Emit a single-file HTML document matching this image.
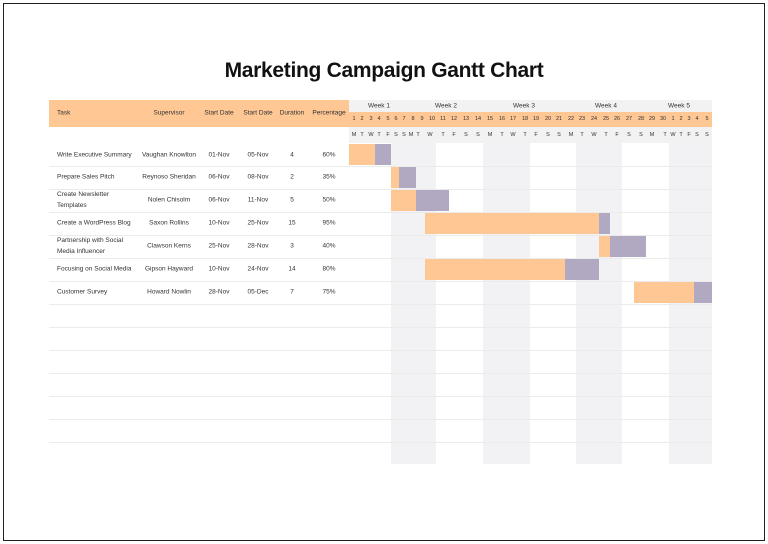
<!DOCTYPE html>
<html><head><meta charset="utf-8"><style>
*{margin:0;padding:0;box-sizing:border-box}
body{width:768px;height:544px;background:#fff;position:relative;overflow:hidden;font-family:"Liberation Sans",sans-serif;color:#333}
.frame{position:absolute;left:3px;top:3px;width:762px;height:538px;border:1.5px solid #222}
.title{position:absolute;left:0;width:768px;top:59px;text-align:center;font-weight:bold;font-size:21px;color:#111;letter-spacing:-0.3px}
.a{position:absolute}
.t{position:absolute;font-size:6.5px;white-space:nowrap;transform:translate(-50%,-50%)}
.l{position:absolute;font-size:6.5px;white-space:nowrap;transform:translateY(-50%);line-height:11px}
.line{position:absolute;left:49px;width:663px;height:1px;background:#ebebeb}
.o{position:absolute;background:#fec793}
.p{position:absolute;background:#b1a9c2}
</style></head><body>
<div class="frame"></div>
<div class="title">Marketing Campaign Gantt Chart</div>
<div class="a" style="left:49px;top:100px;width:300px;height:27px;background:#fec793"></div>
<div class="a" style="left:349px;top:100px;width:363px;height:12px;background:#f2f2f2"></div>
<div class="a" style="left:349px;top:112px;width:363px;height:15px;background:#fec793"></div>
<div class="a" style="left:349px;top:127px;width:363px;height:16px;background:#f2f2f2"></div>
<div class="a" style="left:391px;top:143px;width:45px;height:321px;background:#f2f2f4"></div>
<div class="a" style="left:483px;top:143px;width:47px;height:321px;background:#f2f2f4"></div>
<div class="a" style="left:576px;top:143px;width:46px;height:321px;background:#f2f2f4"></div>
<div class="a" style="left:669px;top:143px;width:43px;height:321px;background:#f2f2f4"></div>
<div class="line" style="top:166px"></div><div class="line" style="top:189px"></div><div class="line" style="top:212px"></div><div class="line" style="top:235px"></div><div class="line" style="top:258px"></div><div class="line" style="top:281px"></div><div class="line" style="top:304px"></div><div class="line" style="top:327px"></div><div class="line" style="top:350px"></div><div class="line" style="top:373px"></div><div class="line" style="top:396px"></div><div class="line" style="top:419px"></div><div class="line" style="top:442px"></div>
<div class="o" style="left:349px;top:144px;width:26px;height:21px"></div><div class="p" style="left:375px;top:144px;width:16px;height:21px"></div>
<div class="o" style="left:391px;top:167px;width:8px;height:21px"></div><div class="p" style="left:399px;top:167px;width:17px;height:21px"></div>
<div class="o" style="left:391px;top:190px;width:25px;height:21px"></div><div class="p" style="left:416px;top:190px;width:33px;height:21px"></div>
<div class="o" style="left:425px;top:213px;width:174px;height:21px"></div><div class="p" style="left:599px;top:213px;width:11px;height:21px"></div>
<div class="o" style="left:599px;top:236px;width:11px;height:21px"></div><div class="p" style="left:610px;top:236px;width:36px;height:21px"></div>
<div class="o" style="left:425px;top:259px;width:140px;height:21px"></div><div class="p" style="left:565px;top:259px;width:34px;height:21px"></div>
<div class="o" style="left:634px;top:282px;width:60px;height:21px"></div><div class="p" style="left:694px;top:282px;width:18px;height:21px"></div>
<div class="l" style="left:57px;top:113px">Task</div>
<div class="t" style="left:169px;top:113px">Supervisor</div>
<div class="t" style="left:219px;top:113px">Start Date</div>
<div class="t" style="left:258px;top:113px">Start Date</div>
<div class="t" style="left:292px;top:113px">Duration</div>
<div class="t" style="left:329px;top:113px">Percentage</div>
<div class="t" style="left:379px;top:106px">Week 1</div>
<div class="t" style="left:446px;top:106px">Week 2</div>
<div class="t" style="left:524px;top:106px">Week 3</div>
<div class="t" style="left:606px;top:106px">Week 4</div>
<div class="t" style="left:679px;top:106px">Week 5</div>
<div>
<div class="t" style="left:354px;top:119px;font-size:5.5px">1</div><div class="t" style="left:362px;top:119px;font-size:5.5px">2</div><div class="t" style="left:371px;top:119px;font-size:5.5px">3</div><div class="t" style="left:379px;top:119px;font-size:5.5px">4</div><div class="t" style="left:388px;top:119px;font-size:5.5px">5</div><div class="t" style="left:396px;top:119px;font-size:5.5px">6</div><div class="t" style="left:404px;top:119px;font-size:5.5px">7</div><div class="t" style="left:413px;top:119px;font-size:5.5px">8</div><div class="t" style="left:422px;top:119px;font-size:5.5px">9</div><div class="t" style="left:432px;top:119px;font-size:5.5px">10</div><div class="t" style="left:443px;top:119px;font-size:5.5px">11</div><div class="t" style="left:454px;top:119px;font-size:5.5px">12</div><div class="t" style="left:466px;top:119px;font-size:5.5px">13</div><div class="t" style="left:478px;top:119px;font-size:5.5px">14</div><div class="t" style="left:490px;top:119px;font-size:5.5px">15</div><div class="t" style="left:502px;top:119px;font-size:5.5px">16</div><div class="t" style="left:513px;top:119px;font-size:5.5px">17</div><div class="t" style="left:525px;top:119px;font-size:5.5px">18</div><div class="t" style="left:536px;top:119px;font-size:5.5px">19</div><div class="t" style="left:548px;top:119px;font-size:5.5px">20</div><div class="t" style="left:559px;top:119px;font-size:5.5px">21</div><div class="t" style="left:571px;top:119px;font-size:5.5px">22</div><div class="t" style="left:582px;top:119px;font-size:5.5px">23</div><div class="t" style="left:594px;top:119px;font-size:5.5px">24</div><div class="t" style="left:606px;top:119px;font-size:5.5px">25</div><div class="t" style="left:617px;top:119px;font-size:5.5px">26</div><div class="t" style="left:629px;top:119px;font-size:5.5px">27</div><div class="t" style="left:641px;top:119px;font-size:5.5px">28</div><div class="t" style="left:652px;top:119px;font-size:5.5px">29</div><div class="t" style="left:663px;top:119px;font-size:5.5px">30</div><div class="t" style="left:673px;top:119px;font-size:5.5px">1</div><div class="t" style="left:681px;top:119px;font-size:5.5px">2</div><div class="t" style="left:689px;top:119px;font-size:5.5px">3</div><div class="t" style="left:697px;top:119px;font-size:5.5px">4</div><div class="t" style="left:707px;top:119px;font-size:5.5px">5</div>
<div class="t" style="left:354px;top:135px;font-size:5.5px">M</div><div class="t" style="left:362px;top:135px;font-size:5.5px">T</div><div class="t" style="left:371px;top:135px;font-size:5.5px">W</div><div class="t" style="left:379px;top:135px;font-size:5.5px">T</div><div class="t" style="left:388px;top:135px;font-size:5.5px">F</div><div class="t" style="left:396px;top:135px;font-size:5.5px">S</div><div class="t" style="left:404px;top:135px;font-size:5.5px">S</div><div class="t" style="left:411px;top:135px;font-size:5.5px">M</div><div class="t" style="left:418px;top:135px;font-size:5.5px">T</div><div class="t" style="left:430px;top:135px;font-size:5.5px">W</div><div class="t" style="left:443px;top:135px;font-size:5.5px">T</div><div class="t" style="left:454px;top:135px;font-size:5.5px">F</div><div class="t" style="left:466px;top:135px;font-size:5.5px">S</div><div class="t" style="left:478px;top:135px;font-size:5.5px">S</div><div class="t" style="left:490px;top:135px;font-size:5.5px">M</div><div class="t" style="left:502px;top:135px;font-size:5.5px">T</div><div class="t" style="left:513px;top:135px;font-size:5.5px">W</div><div class="t" style="left:525px;top:135px;font-size:5.5px">T</div><div class="t" style="left:536px;top:135px;font-size:5.5px">F</div><div class="t" style="left:548px;top:135px;font-size:5.5px">S</div><div class="t" style="left:559px;top:135px;font-size:5.5px">S</div><div class="t" style="left:571px;top:135px;font-size:5.5px">M</div><div class="t" style="left:582px;top:135px;font-size:5.5px">T</div><div class="t" style="left:594px;top:135px;font-size:5.5px">W</div><div class="t" style="left:606px;top:135px;font-size:5.5px">T</div><div class="t" style="left:617px;top:135px;font-size:5.5px">F</div><div class="t" style="left:629px;top:135px;font-size:5.5px">S</div><div class="t" style="left:641px;top:135px;font-size:5.5px">S</div><div class="t" style="left:652px;top:135px;font-size:5.5px">M</div><div class="t" style="left:665px;top:135px;font-size:5.5px">T</div><div class="t" style="left:673px;top:135px;font-size:5.5px">W</div><div class="t" style="left:681px;top:135px;font-size:5.5px">T</div><div class="t" style="left:689px;top:135px;font-size:5.5px">F</div><div class="t" style="left:697px;top:135px;font-size:5.5px">S</div><div class="t" style="left:707px;top:135px;font-size:5.5px">S</div>
</div>
<div class="l" style="left:57px;top:155px">Write Executive Summary</div><div class="t" style="left:169px;top:155px">Vaughan Knowlton</div><div class="t" style="left:219px;top:155px">01-Nov</div><div class="t" style="left:258px;top:155px">05-Nov</div><div class="t" style="left:292px;top:155px">4</div><div class="t" style="left:329px;top:155px">60%</div>
<div class="l" style="left:57px;top:177px">Prepare Sales Pitch</div><div class="t" style="left:169px;top:177px">Reynoso Sheridan</div><div class="t" style="left:219px;top:177px">06-Nov</div><div class="t" style="left:258px;top:177px">08-Nov</div><div class="t" style="left:292px;top:177px">2</div><div class="t" style="left:329px;top:177px">35%</div>
<div class="l" style="left:57px;top:200px">Create Newsletter<br>Templates</div><div class="t" style="left:169px;top:200px">Nolen Chisolm</div><div class="t" style="left:219px;top:200px">06-Nov</div><div class="t" style="left:258px;top:200px">11-Nov</div><div class="t" style="left:292px;top:200px">5</div><div class="t" style="left:329px;top:200px">50%</div>
<div class="l" style="left:57px;top:223px">Create a WordPress Blog</div><div class="t" style="left:169px;top:223px">Saxon Rollins</div><div class="t" style="left:219px;top:223px">10-Nov</div><div class="t" style="left:258px;top:223px">25-Nov</div><div class="t" style="left:292px;top:223px">15</div><div class="t" style="left:329px;top:223px">95%</div>
<div class="l" style="left:57px;top:246px">Partnership with Social<br>Media Influencer</div><div class="t" style="left:169px;top:246px">Clawson Kerns</div><div class="t" style="left:219px;top:246px">25-Nov</div><div class="t" style="left:258px;top:246px">28-Nov</div><div class="t" style="left:292px;top:246px">3</div><div class="t" style="left:329px;top:246px">40%</div>
<div class="l" style="left:57px;top:269px">Focusing on Social Media</div><div class="t" style="left:169px;top:269px">Gipson Hayward</div><div class="t" style="left:219px;top:269px">10-Nov</div><div class="t" style="left:258px;top:269px">24-Nov</div><div class="t" style="left:292px;top:269px">14</div><div class="t" style="left:329px;top:269px">80%</div>
<div class="l" style="left:57px;top:292px">Customer Survey</div><div class="t" style="left:169px;top:292px">Howard Nowlin</div><div class="t" style="left:219px;top:292px">28-Nov</div><div class="t" style="left:258px;top:292px">05-Dec</div><div class="t" style="left:292px;top:292px">7</div><div class="t" style="left:329px;top:292px">75%</div>
</body></html>
